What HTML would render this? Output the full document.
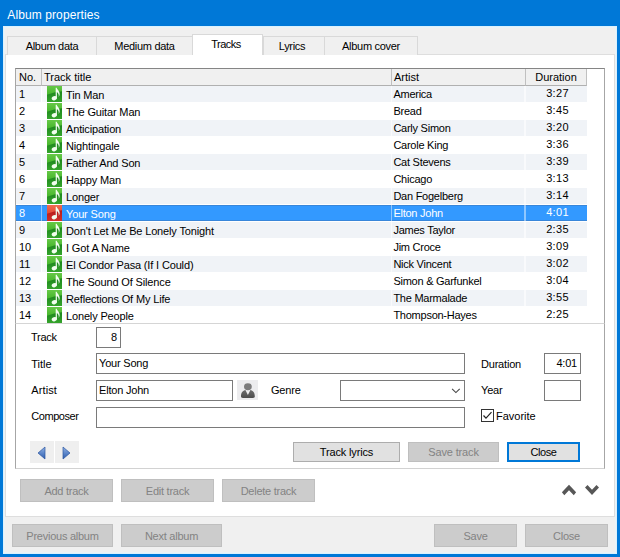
<!DOCTYPE html>
<html><head><meta charset="utf-8"><title>Album properties</title>
<style>
html,body{margin:0;padding:0;}
body{width:620px;height:557px;overflow:hidden;background:#0078d7;position:relative;font-family:"Liberation Sans",sans-serif;font-size:11px;color:#000;}
.abs,.win *{position:absolute;box-sizing:border-box;white-space:nowrap;}
.win{position:absolute;left:0;top:0;width:620px;height:557px;}
.title{left:7.3px;top:7px;font-size:12px;letter-spacing:0.1px;color:#fff;line-height:16px;}
.client{left:3px;top:26px;width:614px;height:528px;background:#f0f0f0;border:1px solid #dcf1fd;box-shadow:inset 0 0 0 1px #eaf3f8;}
.tab{top:36px;height:19px;border:1px solid #d9d9d9;border-bottom:none;background:#f0f0f0;text-align:center;line-height:19px;letter-spacing:-0.3px;}
.tab.sel{top:34px;height:21px;background:#fff;line-height:19px;z-index:3;}
.panel{left:5px;top:54px;width:610px;height:463px;background:#fff;border:1px solid #dedede;}
.list{left:15px;top:68px;width:590px;height:256px;border:1px solid #a6a6a6;border-top-color:#858585;border-bottom:1px solid #d0d0d0;background:#fff;}
.hd{top:69px;height:17px;background:#f0f0f0;border-bottom:1px solid #b0b0b0;border-right:1px solid #c0c0c0;line-height:16px;padding-left:3px;}
.row{left:16px;width:571px;height:16px;line-height:17px;}
.row.odd{background:#f0f3f7;}
.row.sel{background:#3399ff;color:#fff;box-shadow:inset 0 1px 0 #3886da,inset 0 -1px 0 #3886da;}
.row span{top:1px;height:15px;line-height:17px;letter-spacing:-0.15px;}
.row .sep,.row .sep2,.row .sep3{top:0;height:16px;}
.row .n{left:3px;top:0;}
.row .sep{left:25px;width:6px;background:linear-gradient(90deg,rgba(255,255,255,.9) 0,rgba(255,255,255,.9) 1px,rgba(255,255,255,.4) 1px);}
.row.sel .sep{background:linear-gradient(90deg,rgba(255,255,255,.45) 0,rgba(255,255,255,.45) 1px,rgba(255,255,255,0) 1px);}
.row.sel .sep2,.row.sel .sep3{background:rgba(255,255,255,.45);}
.row .t{left:50px;}
.row .sep2{left:375px;width:1px;background:rgba(255,255,255,.6);}
.row .sep3{left:508px;width:2px;background:rgba(255,255,255,.6);}
.row .a{left:377.4px;top:0;letter-spacing:-0.25px;}
.row .d{left:509px;top:-1px;width:62px;text-align:center;padding-left:3px;letter-spacing:0.3px}
.row .ic{left:31px;top:0px;}
.form{left:15px;top:323px;width:590px;height:146px;border:1px solid #a6a6a6;border-top:1px solid #d5d5d5;border-bottom-color:#d2d2d2;background:#fff;}
.lbl{line-height:14px;letter-spacing:-0.2px;}
.inp{border:1px solid #7a7a7a;background:#fff;line-height:18px;padding-left:2px;height:21px;letter-spacing:-0.2px;}
.btn{border:1px solid #adadad;background:#e1e1e1;text-align:center;line-height:17px;font-size:11px;letter-spacing:-0.15px;}
.btn.dis{border-color:#bfbfbf;background:#cccccc;color:#838383;}
.btn.big{height:23px;line-height:23px;letter-spacing:-0.25px;}
.btn.def{border:2px solid #0078d7;line-height:16px;letter-spacing:-0.4px;}
.nav{background:#efefef;width:24px;height:22px;top:441px;}
</style></head><body>
<div class="win">
<div class="title">Album properties</div>
<div class="client"></div>
<div class="panel"></div>
<div class="tab" style="left:7px;width:90px;">Album data</div>
<div class="tab" style="left:96px;width:97px;">Medium data</div>
<div class="tab sel" style="left:192px;width:71px;letter-spacing:-0.5px;padding-right:3px">Tracks</div>
<div class="tab" style="left:263px;width:62px;padding-right:4px;">Lyrics</div>
<div class="tab" style="left:324px;width:94px;">Album cover</div>
<div class="list"></div>
<div class="hd" style="left:16px;width:26px;">No.</div>
<div class="hd" style="left:42px;width:350px;padding-left:2px;">Track title</div>
<div class="hd" style="left:392px;width:134px;padding-left:2px;">Artist</div>
<div class="hd" style="left:526px;width:61px;text-align:center;padding-left:0;">Duration</div>
<div class="row odd" style="top:86px"><span class="n">1</span><span class="sep"></span><svg class="ic" width="15" height="16" viewBox="0 0 15 16"><defs><linearGradient id="g0" x1="0" y1="0" x2="0" y2="1"><stop offset="0.3" stop-color="#1c841d"/><stop offset="1" stop-color="#34a42b"/></linearGradient><linearGradient id="h0" x1="0" y1="0" x2="0" y2="1"><stop offset="0" stop-color="#66c846"/><stop offset="1" stop-color="#46b62c"/></linearGradient></defs><rect width="15" height="16" fill="url(#g0)"/><path d="M0 0 H15 V5.2 Q7 5.8 0 8.8 Z" fill="url(#h0)"/><ellipse cx="7.3" cy="12.2" rx="2.7" ry="2.1" transform="rotate(-18 7.3 12.2)" fill="#f2fdee"/><path d="M8.7 1.7 L9.7 1.7 C10.2 3.6 12.9 5.2 12.7 8.2 C12.6 9.4 12.2 10.3 11.7 10.9 C12 9.2 11.6 7.2 9.9 6 L9.9 12.2 L8.7 12.2 Z" fill="#f2fdee"/></svg><span class="t">Tin Man</span><span class="sep2"></span><span class="a">America</span><span class="sep3"></span><span class="d">3:27</span></div>
<div class="row" style="top:103px"><span class="n">2</span><span class="sep"></span><svg class="ic" width="15" height="16" viewBox="0 0 15 16"><defs><linearGradient id="g1" x1="0" y1="0" x2="0" y2="1"><stop offset="0.3" stop-color="#1c841d"/><stop offset="1" stop-color="#34a42b"/></linearGradient><linearGradient id="h1" x1="0" y1="0" x2="0" y2="1"><stop offset="0" stop-color="#66c846"/><stop offset="1" stop-color="#46b62c"/></linearGradient></defs><rect width="15" height="16" fill="url(#g1)"/><path d="M0 0 H15 V5.2 Q7 5.8 0 8.8 Z" fill="url(#h1)"/><ellipse cx="7.3" cy="12.2" rx="2.7" ry="2.1" transform="rotate(-18 7.3 12.2)" fill="#f2fdee"/><path d="M8.7 1.7 L9.7 1.7 C10.2 3.6 12.9 5.2 12.7 8.2 C12.6 9.4 12.2 10.3 11.7 10.9 C12 9.2 11.6 7.2 9.9 6 L9.9 12.2 L8.7 12.2 Z" fill="#f2fdee"/></svg><span class="t">The Guitar Man</span><span class="sep2"></span><span class="a">Bread</span><span class="sep3"></span><span class="d">3:45</span></div>
<div class="row odd" style="top:120px"><span class="n">3</span><span class="sep"></span><svg class="ic" width="15" height="16" viewBox="0 0 15 16"><defs><linearGradient id="g2" x1="0" y1="0" x2="0" y2="1"><stop offset="0.3" stop-color="#1c841d"/><stop offset="1" stop-color="#34a42b"/></linearGradient><linearGradient id="h2" x1="0" y1="0" x2="0" y2="1"><stop offset="0" stop-color="#66c846"/><stop offset="1" stop-color="#46b62c"/></linearGradient></defs><rect width="15" height="16" fill="url(#g2)"/><path d="M0 0 H15 V5.2 Q7 5.8 0 8.8 Z" fill="url(#h2)"/><ellipse cx="7.3" cy="12.2" rx="2.7" ry="2.1" transform="rotate(-18 7.3 12.2)" fill="#f2fdee"/><path d="M8.7 1.7 L9.7 1.7 C10.2 3.6 12.9 5.2 12.7 8.2 C12.6 9.4 12.2 10.3 11.7 10.9 C12 9.2 11.6 7.2 9.9 6 L9.9 12.2 L8.7 12.2 Z" fill="#f2fdee"/></svg><span class="t">Anticipation</span><span class="sep2"></span><span class="a">Carly Simon</span><span class="sep3"></span><span class="d">3:20</span></div>
<div class="row" style="top:137px"><span class="n">4</span><span class="sep"></span><svg class="ic" width="15" height="16" viewBox="0 0 15 16"><defs><linearGradient id="g3" x1="0" y1="0" x2="0" y2="1"><stop offset="0.3" stop-color="#1c841d"/><stop offset="1" stop-color="#34a42b"/></linearGradient><linearGradient id="h3" x1="0" y1="0" x2="0" y2="1"><stop offset="0" stop-color="#66c846"/><stop offset="1" stop-color="#46b62c"/></linearGradient></defs><rect width="15" height="16" fill="url(#g3)"/><path d="M0 0 H15 V5.2 Q7 5.8 0 8.8 Z" fill="url(#h3)"/><ellipse cx="7.3" cy="12.2" rx="2.7" ry="2.1" transform="rotate(-18 7.3 12.2)" fill="#f2fdee"/><path d="M8.7 1.7 L9.7 1.7 C10.2 3.6 12.9 5.2 12.7 8.2 C12.6 9.4 12.2 10.3 11.7 10.9 C12 9.2 11.6 7.2 9.9 6 L9.9 12.2 L8.7 12.2 Z" fill="#f2fdee"/></svg><span class="t">Nightingale</span><span class="sep2"></span><span class="a">Carole King</span><span class="sep3"></span><span class="d">3:36</span></div>
<div class="row odd" style="top:154px"><span class="n">5</span><span class="sep"></span><svg class="ic" width="15" height="16" viewBox="0 0 15 16"><defs><linearGradient id="g4" x1="0" y1="0" x2="0" y2="1"><stop offset="0.3" stop-color="#1c841d"/><stop offset="1" stop-color="#34a42b"/></linearGradient><linearGradient id="h4" x1="0" y1="0" x2="0" y2="1"><stop offset="0" stop-color="#66c846"/><stop offset="1" stop-color="#46b62c"/></linearGradient></defs><rect width="15" height="16" fill="url(#g4)"/><path d="M0 0 H15 V5.2 Q7 5.8 0 8.8 Z" fill="url(#h4)"/><ellipse cx="7.3" cy="12.2" rx="2.7" ry="2.1" transform="rotate(-18 7.3 12.2)" fill="#f2fdee"/><path d="M8.7 1.7 L9.7 1.7 C10.2 3.6 12.9 5.2 12.7 8.2 C12.6 9.4 12.2 10.3 11.7 10.9 C12 9.2 11.6 7.2 9.9 6 L9.9 12.2 L8.7 12.2 Z" fill="#f2fdee"/></svg><span class="t">Father And Son</span><span class="sep2"></span><span class="a">Cat Stevens</span><span class="sep3"></span><span class="d">3:39</span></div>
<div class="row" style="top:171px"><span class="n">6</span><span class="sep"></span><svg class="ic" width="15" height="16" viewBox="0 0 15 16"><defs><linearGradient id="g5" x1="0" y1="0" x2="0" y2="1"><stop offset="0.3" stop-color="#1c841d"/><stop offset="1" stop-color="#34a42b"/></linearGradient><linearGradient id="h5" x1="0" y1="0" x2="0" y2="1"><stop offset="0" stop-color="#66c846"/><stop offset="1" stop-color="#46b62c"/></linearGradient></defs><rect width="15" height="16" fill="url(#g5)"/><path d="M0 0 H15 V5.2 Q7 5.8 0 8.8 Z" fill="url(#h5)"/><ellipse cx="7.3" cy="12.2" rx="2.7" ry="2.1" transform="rotate(-18 7.3 12.2)" fill="#f2fdee"/><path d="M8.7 1.7 L9.7 1.7 C10.2 3.6 12.9 5.2 12.7 8.2 C12.6 9.4 12.2 10.3 11.7 10.9 C12 9.2 11.6 7.2 9.9 6 L9.9 12.2 L8.7 12.2 Z" fill="#f2fdee"/></svg><span class="t">Happy Man</span><span class="sep2"></span><span class="a">Chicago</span><span class="sep3"></span><span class="d">3:13</span></div>
<div class="row odd" style="top:188px"><span class="n">7</span><span class="sep"></span><svg class="ic" width="15" height="16" viewBox="0 0 15 16"><defs><linearGradient id="g6" x1="0" y1="0" x2="0" y2="1"><stop offset="0.3" stop-color="#1c841d"/><stop offset="1" stop-color="#34a42b"/></linearGradient><linearGradient id="h6" x1="0" y1="0" x2="0" y2="1"><stop offset="0" stop-color="#66c846"/><stop offset="1" stop-color="#46b62c"/></linearGradient></defs><rect width="15" height="16" fill="url(#g6)"/><path d="M0 0 H15 V5.2 Q7 5.8 0 8.8 Z" fill="url(#h6)"/><ellipse cx="7.3" cy="12.2" rx="2.7" ry="2.1" transform="rotate(-18 7.3 12.2)" fill="#f2fdee"/><path d="M8.7 1.7 L9.7 1.7 C10.2 3.6 12.9 5.2 12.7 8.2 C12.6 9.4 12.2 10.3 11.7 10.9 C12 9.2 11.6 7.2 9.9 6 L9.9 12.2 L8.7 12.2 Z" fill="#f2fdee"/></svg><span class="t">Longer</span><span class="sep2"></span><span class="a">Dan Fogelberg</span><span class="sep3"></span><span class="d">3:14</span></div>
<div class="row sel" style="top:205px"><span class="n">8</span><span class="sep"></span><svg class="ic" width="15" height="16" viewBox="0 0 15 16"><defs><linearGradient id="g7" x1="0" y1="0" x2="0" y2="1"><stop offset="0.3" stop-color="#b41a1a"/><stop offset="1" stop-color="#d0302a"/></linearGradient><linearGradient id="h7" x1="0" y1="0" x2="0" y2="1"><stop offset="0" stop-color="#f26a50"/><stop offset="1" stop-color="#e04a36"/></linearGradient></defs><rect width="15" height="16" fill="url(#g7)"/><path d="M0 0 H15 V5.2 Q7 5.8 0 8.8 Z" fill="url(#h7)"/><ellipse cx="7.3" cy="12.2" rx="2.7" ry="2.1" transform="rotate(-18 7.3 12.2)" fill="#f2fdee"/><path d="M8.7 1.7 L9.7 1.7 C10.2 3.6 12.9 5.2 12.7 8.2 C12.6 9.4 12.2 10.3 11.7 10.9 C12 9.2 11.6 7.2 9.9 6 L9.9 12.2 L8.7 12.2 Z" fill="#f2fdee"/></svg><span class="t">Your Song</span><span class="sep2"></span><span class="a">Elton John</span><span class="sep3"></span><span class="d">4:01</span></div>
<div class="row odd" style="top:222px"><span class="n">9</span><span class="sep"></span><svg class="ic" width="15" height="16" viewBox="0 0 15 16"><defs><linearGradient id="g8" x1="0" y1="0" x2="0" y2="1"><stop offset="0.3" stop-color="#1c841d"/><stop offset="1" stop-color="#34a42b"/></linearGradient><linearGradient id="h8" x1="0" y1="0" x2="0" y2="1"><stop offset="0" stop-color="#66c846"/><stop offset="1" stop-color="#46b62c"/></linearGradient></defs><rect width="15" height="16" fill="url(#g8)"/><path d="M0 0 H15 V5.2 Q7 5.8 0 8.8 Z" fill="url(#h8)"/><ellipse cx="7.3" cy="12.2" rx="2.7" ry="2.1" transform="rotate(-18 7.3 12.2)" fill="#f2fdee"/><path d="M8.7 1.7 L9.7 1.7 C10.2 3.6 12.9 5.2 12.7 8.2 C12.6 9.4 12.2 10.3 11.7 10.9 C12 9.2 11.6 7.2 9.9 6 L9.9 12.2 L8.7 12.2 Z" fill="#f2fdee"/></svg><span class="t">Don't Let Me Be Lonely Tonight</span><span class="sep2"></span><span class="a">James Taylor</span><span class="sep3"></span><span class="d">2:35</span></div>
<div class="row" style="top:239px"><span class="n">10</span><span class="sep"></span><svg class="ic" width="15" height="16" viewBox="0 0 15 16"><defs><linearGradient id="g9" x1="0" y1="0" x2="0" y2="1"><stop offset="0.3" stop-color="#1c841d"/><stop offset="1" stop-color="#34a42b"/></linearGradient><linearGradient id="h9" x1="0" y1="0" x2="0" y2="1"><stop offset="0" stop-color="#66c846"/><stop offset="1" stop-color="#46b62c"/></linearGradient></defs><rect width="15" height="16" fill="url(#g9)"/><path d="M0 0 H15 V5.2 Q7 5.8 0 8.8 Z" fill="url(#h9)"/><ellipse cx="7.3" cy="12.2" rx="2.7" ry="2.1" transform="rotate(-18 7.3 12.2)" fill="#f2fdee"/><path d="M8.7 1.7 L9.7 1.7 C10.2 3.6 12.9 5.2 12.7 8.2 C12.6 9.4 12.2 10.3 11.7 10.9 C12 9.2 11.6 7.2 9.9 6 L9.9 12.2 L8.7 12.2 Z" fill="#f2fdee"/></svg><span class="t">I Got A Name</span><span class="sep2"></span><span class="a">Jim Croce</span><span class="sep3"></span><span class="d">3:09</span></div>
<div class="row odd" style="top:256px"><span class="n">11</span><span class="sep"></span><svg class="ic" width="15" height="16" viewBox="0 0 15 16"><defs><linearGradient id="g10" x1="0" y1="0" x2="0" y2="1"><stop offset="0.3" stop-color="#1c841d"/><stop offset="1" stop-color="#34a42b"/></linearGradient><linearGradient id="h10" x1="0" y1="0" x2="0" y2="1"><stop offset="0" stop-color="#66c846"/><stop offset="1" stop-color="#46b62c"/></linearGradient></defs><rect width="15" height="16" fill="url(#g10)"/><path d="M0 0 H15 V5.2 Q7 5.8 0 8.8 Z" fill="url(#h10)"/><ellipse cx="7.3" cy="12.2" rx="2.7" ry="2.1" transform="rotate(-18 7.3 12.2)" fill="#f2fdee"/><path d="M8.7 1.7 L9.7 1.7 C10.2 3.6 12.9 5.2 12.7 8.2 C12.6 9.4 12.2 10.3 11.7 10.9 C12 9.2 11.6 7.2 9.9 6 L9.9 12.2 L8.7 12.2 Z" fill="#f2fdee"/></svg><span class="t">El Condor Pasa (If I Could)</span><span class="sep2"></span><span class="a">Nick Vincent</span><span class="sep3"></span><span class="d">3:02</span></div>
<div class="row" style="top:273px"><span class="n">12</span><span class="sep"></span><svg class="ic" width="15" height="16" viewBox="0 0 15 16"><defs><linearGradient id="g11" x1="0" y1="0" x2="0" y2="1"><stop offset="0.3" stop-color="#1c841d"/><stop offset="1" stop-color="#34a42b"/></linearGradient><linearGradient id="h11" x1="0" y1="0" x2="0" y2="1"><stop offset="0" stop-color="#66c846"/><stop offset="1" stop-color="#46b62c"/></linearGradient></defs><rect width="15" height="16" fill="url(#g11)"/><path d="M0 0 H15 V5.2 Q7 5.8 0 8.8 Z" fill="url(#h11)"/><ellipse cx="7.3" cy="12.2" rx="2.7" ry="2.1" transform="rotate(-18 7.3 12.2)" fill="#f2fdee"/><path d="M8.7 1.7 L9.7 1.7 C10.2 3.6 12.9 5.2 12.7 8.2 C12.6 9.4 12.2 10.3 11.7 10.9 C12 9.2 11.6 7.2 9.9 6 L9.9 12.2 L8.7 12.2 Z" fill="#f2fdee"/></svg><span class="t">The Sound Of Silence</span><span class="sep2"></span><span class="a">Simon &amp; Garfunkel</span><span class="sep3"></span><span class="d">3:04</span></div>
<div class="row odd" style="top:290px"><span class="n">13</span><span class="sep"></span><svg class="ic" width="15" height="16" viewBox="0 0 15 16"><defs><linearGradient id="g12" x1="0" y1="0" x2="0" y2="1"><stop offset="0.3" stop-color="#1c841d"/><stop offset="1" stop-color="#34a42b"/></linearGradient><linearGradient id="h12" x1="0" y1="0" x2="0" y2="1"><stop offset="0" stop-color="#66c846"/><stop offset="1" stop-color="#46b62c"/></linearGradient></defs><rect width="15" height="16" fill="url(#g12)"/><path d="M0 0 H15 V5.2 Q7 5.8 0 8.8 Z" fill="url(#h12)"/><ellipse cx="7.3" cy="12.2" rx="2.7" ry="2.1" transform="rotate(-18 7.3 12.2)" fill="#f2fdee"/><path d="M8.7 1.7 L9.7 1.7 C10.2 3.6 12.9 5.2 12.7 8.2 C12.6 9.4 12.2 10.3 11.7 10.9 C12 9.2 11.6 7.2 9.9 6 L9.9 12.2 L8.7 12.2 Z" fill="#f2fdee"/></svg><span class="t">Reflections Of My Life</span><span class="sep2"></span><span class="a">The Marmalade</span><span class="sep3"></span><span class="d">3:55</span></div>
<div class="row" style="top:307px"><span class="n">14</span><span class="sep"></span><svg class="ic" width="15" height="16" viewBox="0 0 15 16"><defs><linearGradient id="g13" x1="0" y1="0" x2="0" y2="1"><stop offset="0.3" stop-color="#1c841d"/><stop offset="1" stop-color="#34a42b"/></linearGradient><linearGradient id="h13" x1="0" y1="0" x2="0" y2="1"><stop offset="0" stop-color="#66c846"/><stop offset="1" stop-color="#46b62c"/></linearGradient></defs><rect width="15" height="16" fill="url(#g13)"/><path d="M0 0 H15 V5.2 Q7 5.8 0 8.8 Z" fill="url(#h13)"/><ellipse cx="7.3" cy="12.2" rx="2.7" ry="2.1" transform="rotate(-18 7.3 12.2)" fill="#f2fdee"/><path d="M8.7 1.7 L9.7 1.7 C10.2 3.6 12.9 5.2 12.7 8.2 C12.6 9.4 12.2 10.3 11.7 10.9 C12 9.2 11.6 7.2 9.9 6 L9.9 12.2 L8.7 12.2 Z" fill="#f2fdee"/></svg><span class="t">Lonely People</span><span class="sep2"></span><span class="a">Thompson-Hayes</span><span class="sep3"></span><span class="d">2:25</span></div>
<div class="form"></div>
<div class="lbl" style="left:31px;top:330px;letter-spacing:-0.25px">Track</div>
<div class="inp" style="left:96px;top:327px;width:25px;text-align:right;padding-right:3px;">8</div>
<div class="lbl" style="left:31.3px;top:357px;letter-spacing:0">Title</div>
<div class="inp" style="left:96px;top:353px;width:369px;">Your Song</div>
<div class="lbl" style="left:481px;top:357px;">Duration</div>
<div class="inp" style="left:544px;top:353px;width:37px;text-align:right;padding-right:3px;">4:01</div>
<div class="lbl" style="left:31.3px;top:383px;letter-spacing:0.1px">Artist</div>
<div class="inp" style="left:96px;top:380px;width:137px;">Elton John</div>
<div class="abs" style="left:237px;top:380px;width:21px;height:20px;background:#ececee;">
<svg width="21" height="21" viewBox="0 0 21 21" style="left:0;top:0"><defs><linearGradient id="pb" x1="0" y1="0" x2="0" y2="1"><stop offset="0" stop-color="#6c6c6c"/><stop offset="1" stop-color="#4c4c4c"/></linearGradient></defs><path d="M4 16.5 C3.8 12.5 6 10.3 8.4 9.9 L10.9 15 L13.4 9.9 C15.8 10.3 18 12.5 17.8 16.5 C17.8 17.5 17 17.9 16 17.9 L5.8 17.9 C4.8 17.9 4 17.5 4 16.5 Z" fill="url(#pb)"/><ellipse cx="10.9" cy="6.8" rx="3.9" ry="3.45" fill="#7c7c7c"/></svg></div>
<div class="lbl" style="left:271px;top:383px;">Genre</div>
<div class="inp" style="left:340px;top:380px;width:125px;"><svg width="10" height="6" viewBox="0 0 10 6" style="left:110px;top:7px"><path d="M1.1 0.9 L4.9 4.6 L8.7 0.9" fill="none" stroke="#444" stroke-width="1.1"/></svg></div>
<div class="lbl" style="left:481px;top:383px;">Year</div>
<div class="inp" style="left:544px;top:380px;width:37px;"></div>
<div class="lbl" style="left:31.3px;top:409px;letter-spacing:-0.45px;">Composer</div>
<div class="inp" style="left:96px;top:407px;width:369px;"></div>
<div class="abs" style="left:481px;top:409px;width:13px;height:13px;border:1px solid #333;background:#fff;"><svg width="11" height="11" viewBox="0 0 11 11" style="left:0;top:0"><path d="M1.5 5.5 L4 8.2 L9.5 2.2" fill="none" stroke="#222" stroke-width="1.2"/></svg></div>
<div class="lbl" style="left:496px;top:409px;letter-spacing:0">Favorite</div>
<div class="nav" style="left:30px;"><svg width="24" height="22" viewBox="0 0 24 22" style="left:0;top:0"><defs><linearGradient id="na" x1="0" y1="0" x2="0" y2="1"><stop offset="0" stop-color="#8fb2e6"/><stop offset="1" stop-color="#2d5cae"/></linearGradient></defs><path d="M15 6 L15 18 L8 12 Z" fill="url(#na)" stroke="#2c56a0" stroke-width="0.7"/></svg></div>
<div class="nav" style="left:55px;"><svg width="24" height="22" viewBox="0 0 24 22" style="left:0;top:0"><path d="M8 6 L8 18 L15 12 Z" fill="url(#na)" stroke="#2c56a0" stroke-width="0.7"/></svg></div>
<div class="btn" style="left:293px;top:442px;width:107px;height:20px;line-height:18px;">Track lyrics</div>
<div class="btn dis" style="left:408px;top:442px;width:91px;height:20px;line-height:18px;">Save track</div>
<div class="btn def" style="left:507px;top:442px;width:73px;height:20px;">Close</div>
<div class="btn dis big" style="left:20px;top:479px;width:93px;">Add track</div>
<div class="btn dis big" style="left:121px;top:479px;width:93px;">Edit track</div>
<div class="btn dis big" style="left:222px;top:479px;width:93px;">Delete track</div>
<svg width="50" height="20" viewBox="555 480 50 20" style="left:555px;top:480px"><path d="M569 484.7 L561.9 492.3 L564.3 495.2 L569 490.3 L573.8 495.2 L576.1 492.3 Z" fill="#575757"/><path d="M585 487.5 L587.5 484.9 L592 489.7 L596.5 484.9 L599 487.5 L592 495 Z" fill="#575757"/></svg>
<div class="btn dis big" style="left:12px;top:524px;width:101px;">Previous album</div>
<div class="btn dis big" style="left:121px;top:524px;width:101px;">Next album</div>
<div class="btn dis big" style="left:434px;top:524px;width:83px;">Save</div>
<div class="btn dis big" style="left:525px;top:524px;width:83px;">Close</div>
</div>
</body></html>
